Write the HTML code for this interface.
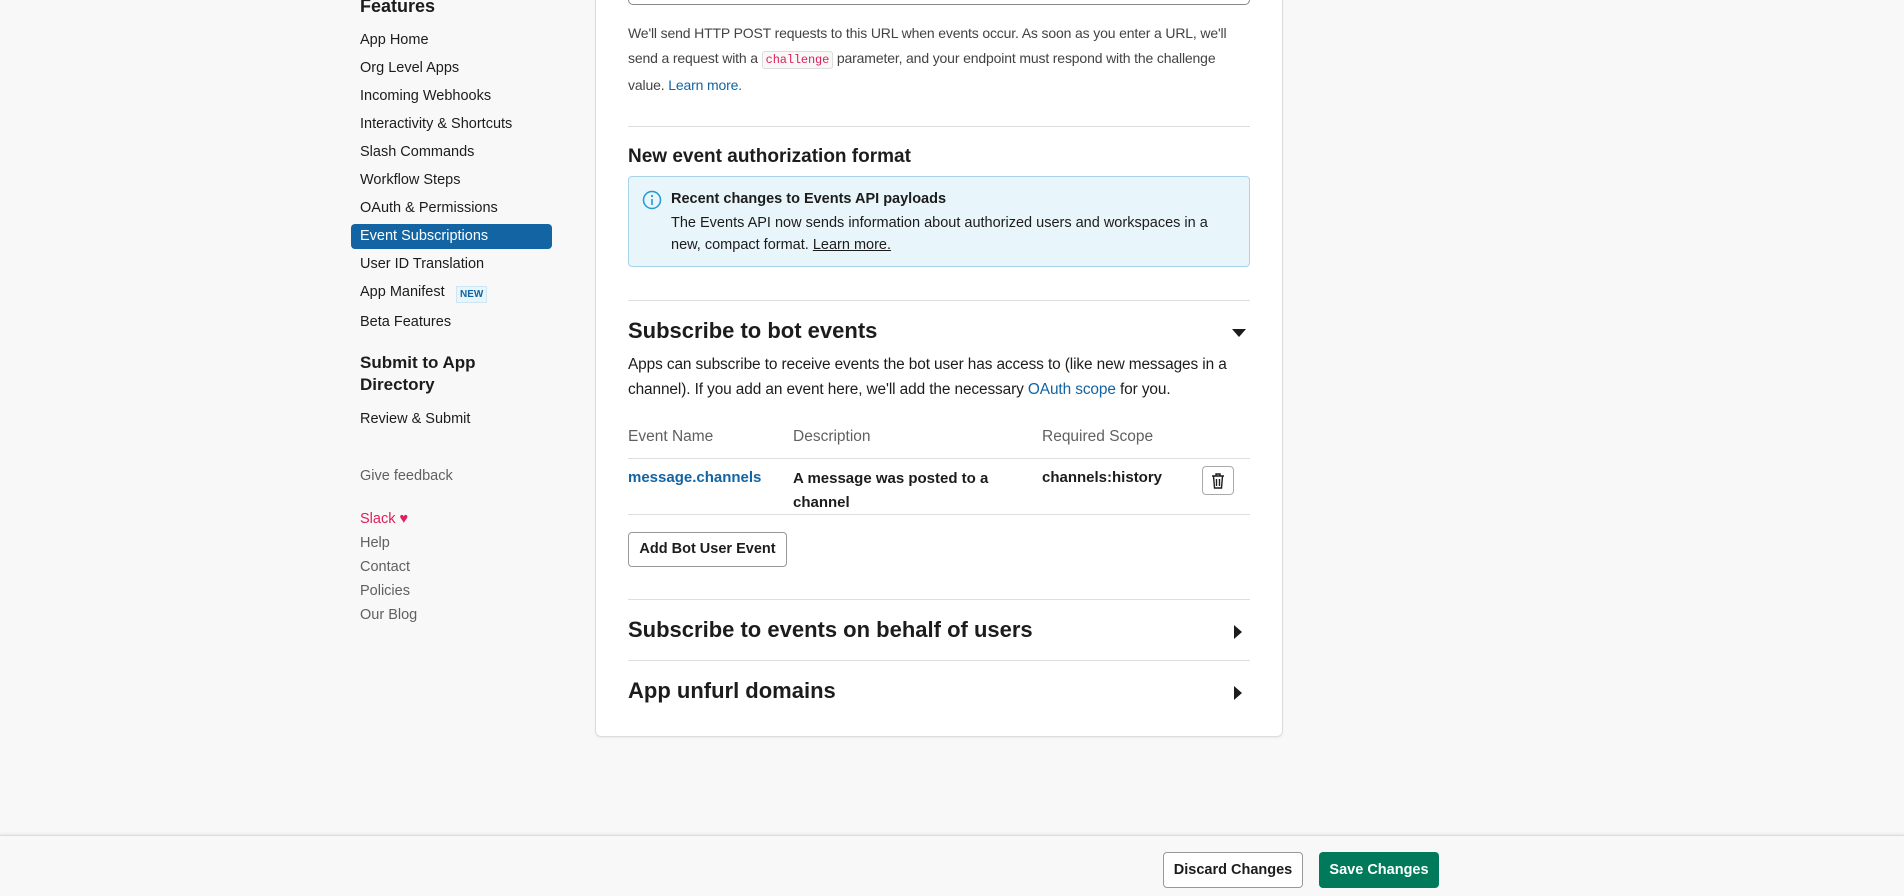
<!DOCTYPE html>
<html><head><meta charset="utf-8"><style>
*{box-sizing:border-box;margin:0;padding:0}
body{width:1904px;height:896px;background:#f8f8f8;font-family:"Liberation Sans",sans-serif;color:#1d1c1d;position:relative;overflow:hidden}
.a{position:absolute;white-space:nowrap}
.nav{left:360px;font-size:14.5px;color:#1d1c1d}
.card{position:absolute;left:595px;top:-10px;width:688px;height:747px;background:#fff;border:1px solid #ddd;border-radius:0 0 6px 6px;box-shadow:0 1px 2px rgba(0,0,0,.06)}
.hr{position:absolute;left:628px;width:622px;height:1px;background:#ddd}
.p{font-size:15px;color:#454245;line-height:25px}
a,.lk{color:#1264a3;text-decoration:none}
.h2{font-size:22px;font-weight:bold;color:#1d1c1d}
.tri{position:absolute;width:0;height:0}
</style></head><body>
<div class="a" style="left:360px;top:-4px;font-size:18px;font-weight:bold">Features</div>
<div class="a nav" style="top:32px">App Home</div>
<div class="a nav" style="top:60px">Org Level Apps</div>
<div class="a nav" style="top:88px">Incoming Webhooks</div>
<div class="a nav" style="top:116px">Interactivity &amp; Shortcuts</div>
<div class="a nav" style="top:144px">Slash Commands</div>
<div class="a nav" style="top:172px">Workflow Steps</div>
<div class="a nav" style="top:200px">OAuth &amp; Permissions</div>
<div class="a" style="left:351px;top:224px;width:201px;height:25px;background:#1264a3;border-radius:4px"></div>
<div class="a nav" style="top:228px;color:#fff">Event Subscriptions</div>
<div class="a nav" style="top:256px">User ID Translation</div>
<div class="a nav" style="top:284px">App Manifest</div>
<div class="a" style="left:456px;top:286px;font-size:10px;color:#1264a3;background:#e8f5fa;border:1px solid #cde6f2;padding:2px 3px;font-weight:bold">NEW</div>
<div class="a nav" style="top:314px">Beta Features</div>
<div class="a" style="left:360px;top:352px;font-size:17px;font-weight:bold;line-height:22px">Submit to App<br>Directory</div>
<div class="a nav" style="top:411px">Review &amp; Submit</div>
<div class="a nav" style="top:468px;color:#616061">Give feedback</div>
<div class="a nav" style="top:511px;color:#e01e5a">Slack ♥</div>
<div class="a nav" style="top:535px;color:#616061">Help</div>
<div class="a nav" style="top:559px;color:#616061">Contact</div>
<div class="a nav" style="top:583px;color:#616061">Policies</div>
<div class="a nav" style="top:607px;color:#616061">Our Blog</div>

<div class="card"></div>
<div class="a" style="left:628px;top:-10px;width:622px;height:15px;border:1px solid #888;border-radius:0 0 5px 5px"></div>
<div class="a p" style="left:628px;top:21px;font-size:14px;letter-spacing:-0.15px">We'll send HTTP POST requests to this URL when events occur. As soon as you enter a URL, we'll<br>send a request with a <span style="font-family:'Liberation Mono',monospace;color:#e01e5a;font-size:12px;border:1px solid #ddd;background:#f8f8f8;padding:1px 3px;border-radius:3px">challenge</span> parameter, and your endpoint must respond with the challenge<br>value. <a>Learn more.</a></div>
<div class="hr" style="top:126px"></div>
<div class="a" style="left:628px;top:146px;font-size:19px;font-weight:bold">New event authorization format</div>
<div class="a" style="left:628px;top:176px;width:622px;height:91px;background:#e8f5fa;border:1px solid #a9d3e8;border-radius:4px"></div>
<svg class="a" style="left:642px;top:190px" width="20" height="20" viewBox="0 0 20 20"><circle cx="10" cy="10" r="8.5" fill="none" stroke="#1d9bd1" stroke-width="1.5"/><circle cx="10" cy="6" r="1.1" fill="#1d9bd1"/><path d="M10 9v6" stroke="#1d9bd1" stroke-width="1.6"/></svg>
<div class="a" style="left:671px;top:191px;font-size:14.5px;font-weight:bold">Recent changes to Events API payloads</div>
<div class="a" style="left:671px;top:212px;font-size:14.5px;line-height:22px">The Events API now sends information about authorized users and workspaces in a<br>new, compact format. <u>Learn more.</u></div>
<div class="hr" style="top:300px"></div>
<div class="a h2" style="left:628px;top:318px">Subscribe to bot events</div>
<div class="tri" style="left:1232px;top:329px;border-left:7px solid transparent;border-right:7px solid transparent;border-top:8px solid #1d1c1d"></div>
<div class="a" style="left:628px;top:352px;font-size:15.4px;line-height:25px;letter-spacing:-0.1px">Apps can subscribe to receive events the bot user has access to (like new messages in a<br>channel). If you add an event here, we'll add the necessary <a>OAuth scope</a> for you.</div>
<div class="a" style="left:628px;top:428px;font-size:15.5px;color:#616061">Event Name</div>
<div class="a" style="left:793px;top:428px;font-size:15.5px;color:#616061">Description</div>
<div class="a" style="left:1042px;top:428px;font-size:15.5px;color:#616061">Required Scope</div>
<div class="hr" style="top:458px"></div>
<div class="a" style="left:628px;top:469px;font-size:15px;font-weight:bold;color:#1264a3">message.channels</div>
<div class="a" style="left:793px;top:467px;font-size:15px;font-weight:bold;line-height:24px">A message was posted to a<br>channel</div>
<div class="a" style="left:1042px;top:469px;font-size:15px;font-weight:bold">channels:history</div>
<div class="a" style="left:1202px;top:466px;width:32px;height:29px;border:1px solid #aaa;border-radius:4px"></div>
<svg class="a" style="left:1209px;top:471px" width="18" height="19" viewBox="0 0 18 19"><path d="M3 5h12M7 5V3h4v2M4.5 5l1 12h7l1-12M7.5 8v7M10.5 8v7" fill="none" stroke="#1d1c1d" stroke-width="1.4"/></svg>
<div class="hr" style="top:514px"></div>
<div class="a" style="left:628px;top:532px;width:159px;height:35px;border:1px solid #999;border-radius:4px;background:#fff;font-size:14.5px;font-weight:bold;text-align:center;line-height:33px">Add Bot User Event</div>
<div class="hr" style="top:599px"></div>
<div class="a h2" style="left:628px;top:617px">Subscribe to events on behalf of users</div>
<div class="tri" style="left:1234px;top:625px;border-top:7px solid transparent;border-bottom:7px solid transparent;border-left:8px solid #1d1c1d"></div>
<div class="hr" style="top:660px"></div>
<div class="a h2" style="left:628px;top:678px">App unfurl domains</div>
<div class="tri" style="left:1234px;top:686px;border-top:7px solid transparent;border-bottom:7px solid transparent;border-left:8px solid #1d1c1d"></div>

<div class="a" style="left:0;top:835px;width:1904px;height:61px;background:#f8f8f8;border-top:1px solid #ddd;box-shadow:0 -1px 3px rgba(0,0,0,.08)"></div>
<div class="a" style="left:1163px;top:852px;width:140px;height:36px;border:1px solid #999;border-radius:4px;background:#fff;font-size:14.5px;font-weight:bold;text-align:center;line-height:34px">Discard Changes</div>
<div class="a" style="left:1319px;top:852px;width:120px;height:36px;border-radius:4px;background:#007a5a;color:#fff;font-size:14.5px;font-weight:bold;text-align:center;line-height:36px">Save Changes</div>
</body></html>
